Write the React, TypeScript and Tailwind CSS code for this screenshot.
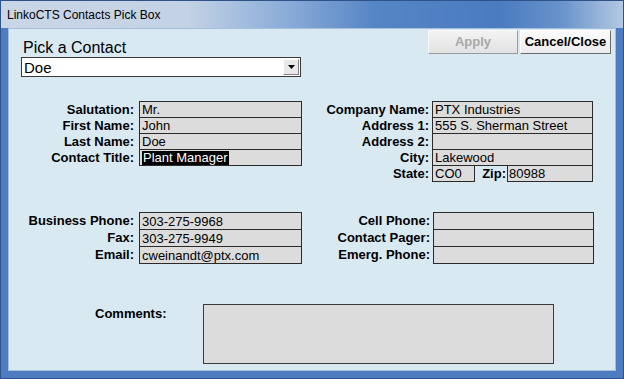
import React from "react";

const font = { fontFamily: '"Liberation Sans", Arial, sans-serif' };

function Field({ children, w, h = "h-[17px]", first = false, highlight = false }: { children?: React.ReactNode; w: string; h?: string; first?: boolean; highlight?: boolean }) {
  return (
    <div className={`${w} ${h} ${first ? "" : "-mt-px"} border border-[#2b2b2b] bg-[#dcdcdc] flex items-center pl-[2px] text-[13px] leading-none text-black overflow-hidden whitespace-nowrap`}>
      {highlight ? <span className="bg-black text-white px-[1px] leading-[14px]">{children}</span> : children}
    </div>
  );
}

function Label({ children, h = "h-[16px]" }: { children: React.ReactNode; h?: string }) {
  return <div className={`${h} flex items-center justify-end text-[13px] font-bold leading-none text-black whitespace-nowrap`}>{children}</div>;
}

export default function App() {
  return (
    <div style={font} className="w-[624px] h-[379px] flex flex-col border border-[#2f5288] bg-[#4a79bb]">
      <div className="h-[27px] shrink-0 flex items-center pl-[6px] bg-[linear-gradient(90deg,#c9d6e6_0%,#c3d2e5_30%,#8aacd8_46%,#5685c5_60%,#4a7bc0_80%,#6892cb_90%,#b3c8e3_100%)]">
        <span className="text-[12px] text-black leading-none">LinkoCTS Contacts Pick Box</span>
      </div>
      <div className="flex-1 min-h-0 flex flex-col border-x-[7px] border-b-[7px] border-[#4d7dc0]">
        <div className="flex-1 min-h-0 overflow-hidden border border-[#a6bedc] bg-[#d9e9f2] flex flex-col">
          <div className="flex justify-between">
            <div className="pl-[12px] pt-[10px]">
              <div className="pl-[2px] text-[16px] leading-[18px] text-black">Pick a Contact</div>
              <div className="w-[280px] h-[20px] border border-[#3a3a3a] bg-white flex items-center justify-between pl-[2px] pr-[1px]">
                <span className="text-[15px] leading-none text-black">Doe</span>
                <div className="w-[16px] h-[16px] bg-[#e8e8e8] border border-t-white border-l-white border-r-[#808080] border-b-[#808080] flex items-center justify-center">
                  <svg width="7" height="4" viewBox="0 0 7 4"><path d="M0 0h7L3.5 4z" fill="#000" /></svg>
                </div>
              </div>
            </div>
            <div className="flex gap-[2px] pt-[1px] pr-[4px]">
              <div className="w-[90px] h-[24px] flex items-center justify-center bg-[linear-gradient(180deg,#f3f3f3,#e2e2e2)] border border-t-[#f8f8f8] border-l-[#f8f8f8] border-r-[#9a9a9a] border-b-[#9a9a9a] text-[13px] font-bold text-[#a8a8a8]">Apply</div>
              <div className="w-[91px] h-[24px] flex items-center justify-center bg-[linear-gradient(180deg,#fbfbfb,#ececec)] border border-t-[#ffffff] border-l-[#ffffff] border-r-[#6a6a6a] border-b-[#6a6a6a] text-[13px] font-bold text-black">Cancel/Close</div>
            </div>
          </div>

          <div className="flex mt-[24px]">
            <div className="flex">
              <div className="w-[125px] flex flex-col">
                <Label>Salutation:</Label>
                <Label>First Name:</Label>
                <Label>Last Name:</Label>
                <Label>Contact Title:</Label>
              </div>
              <div className="ml-[5px] flex flex-col">
                <Field w="w-[163px]" first>Mr.</Field>
                <Field w="w-[163px]">John</Field>
                <Field w="w-[163px]">Doe</Field>
                <Field w="w-[163px]" highlight>Plant Manager</Field>
              </div>
            </div>
            <div className="flex">
              <div className="w-[127px] flex flex-col">
                <Label>Company Name:</Label>
                <Label>Address 1:</Label>
                <Label>Address 2:</Label>
                <Label>City:</Label>
                <Label>State:</Label>
              </div>
              <div className="ml-[3px] flex flex-col">
                <Field w="w-[161px]" first>PTX Industries</Field>
                <Field w="w-[161px]">555 S. Sherman Street</Field>
                <Field w="w-[161px]"></Field>
                <Field w="w-[161px]">Lakewood</Field>
                <div className="flex -mt-px">
                  <div className="w-[43px] h-[17px] border border-[#2b2b2b] bg-[#dcdcdc] flex items-center pl-[2px] text-[13px] leading-none">CO0</div>
                  <div className="w-[32px] h-[17px] flex items-center justify-end pr-[1px] text-[13px] font-bold leading-none">Zip:</div>
                  <div className="w-[86px] h-[17px] border border-[#2b2b2b] bg-[#dcdcdc] flex items-center pl-[1px] text-[13px] leading-none">80988</div>
                </div>
              </div>
            </div>
          </div>

          <div className="flex mt-[30px]">
            <div className="flex">
              <div className="w-[125px] flex flex-col">
                <Label h="h-[17px]">Business Phone:</Label>
                <Label h="h-[17px]">Fax:</Label>
                <Label h="h-[17px]">Email:</Label>
              </div>
              <div className="ml-[5px] flex flex-col">
                <Field w="w-[163px]" h="h-[18px]" first>303-275-9968</Field>
                <Field w="w-[163px]" h="h-[18px]">303-275-9949</Field>
                <Field w="w-[163px]" h="h-[18px]">cweinandt@ptx.com</Field>
              </div>
            </div>
            <div className="flex">
              <div className="w-[128px] flex flex-col">
                <Label h="h-[17px]">Cell Phone:</Label>
                <Label h="h-[17px]">Contact Pager:</Label>
                <Label h="h-[17px]">Emerg. Phone:</Label>
              </div>
              <div className="ml-[3px] flex flex-col">
                <Field w="w-[161px]" h="h-[18px]" first></Field>
                <Field w="w-[161px]" h="h-[18px]"></Field>
                <Field w="w-[161px]" h="h-[18px]"></Field>
              </div>
            </div>
          </div>

          <div className="flex mt-[40px]">
            <div className="w-[107px] pl-[86px] pt-[2px] text-[13px] font-bold leading-[16px] whitespace-nowrap">Comments:</div>
            <div className="ml-[87px] w-[351px] h-[60px] border border-[#3a3a3a] bg-[#dcdcdc]"></div>
          </div>
        </div>
      </div>
    </div>
  );
}
